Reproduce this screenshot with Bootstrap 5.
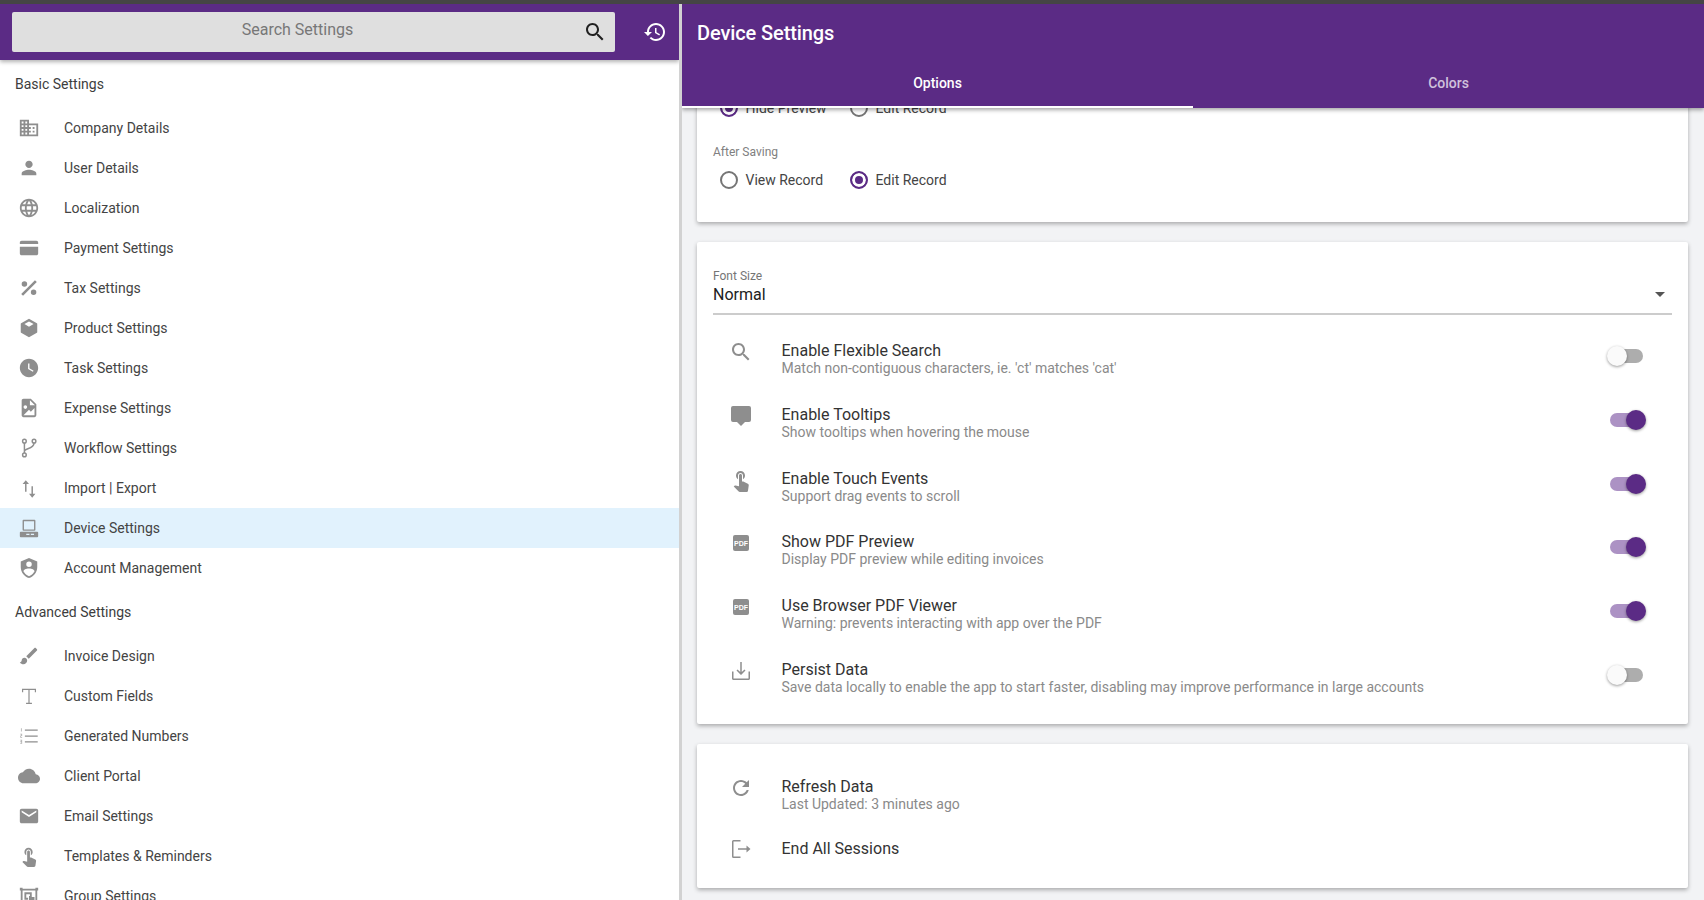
<!DOCTYPE html>
<html lang="en">
<head>
<meta charset="utf-8">
<title>Device Settings</title>
<link href="https://cdn.jsdelivr.net/npm/bootstrap@5.3.0/dist/css/bootstrap.min.css" rel="stylesheet">
<style>
html,body{height:100%;overflow:hidden}
body{font-family:Roboto,"Liberation Sans",sans-serif;background:#f2f3f5;color:#212121;border-top:4px solid #454545}
.app-shell{height:896px}
.side-pane{width:679px;background:#fff;height:100%;overflow:hidden;flex:none}
.pane-gap{width:3px;background:#d2d2d2;flex:none}
.main-pane{flex:1;min-width:0;height:100%;overflow:hidden;background:#f2f3f5}
.side-head{height:56px;background:#5b2b85;padding:8px 12px;box-shadow:0 2px 4px rgba(0,0,0,.3);position:relative;z-index:2}
.search-box{width:603px;height:40px;background:#dfdfdf;border-radius:2px;color:#777;font-size:16px;position:relative;padding:0 32px 4px 0}
.search-ico{position:absolute;right:8px;top:8px;width:24px;height:24px;fill:#212121}
.hist-ico{width:24px;height:24px;fill:#fff;margin-left:28px}
.sec-title{height:48px;padding-left:15px;font-size:14px;color:#3d3d3d;line-height:48px}
.side-row{height:40px;padding-left:18px;font-size:14px;color:#444;gap:24px}
.side-row.is-active{background:#e1f2fd}
.ico{width:24px;height:24px;fill:#8e8e8e;flex:none}
.side-row .ico{width:22px;height:22px}
.main-head{height:104px;background:#5b2b85;color:#fff;box-shadow:0 2px 4px rgba(0,0,0,.35);position:relative;z-index:2}
.head-title{font-size:20px;font-weight:500;letter-spacing:-.1px;padding:16px 15px 0;height:56px;line-height:26px}
.tab-item{height:48px;font-size:14px;font-weight:500;line-height:46px;text-align:center;color:rgba(255,255,255,.72);flex:1 1 0}
.tab-item.is-on{color:#fff;border-bottom:2px solid #fff}
.scroller{margin:-20px 16px 0 15px}
.sheet{border:0;border-radius:2px;background:#fff;box-shadow:0 2px 4px rgba(0,0,0,.3);margin-bottom:20px}
.sheet-a{padding:0 16px 22px;height:134px}
.radio-row{height:40px;gap:0}
.radio-opt{width:130px;padding-left:7px;font-size:14px;color:#444;gap:7.500px}
.radio-dot{width:18px;height:18px;border-radius:50%;border:2px solid #757575;flex:none}
.radio-dot.is-on{border-color:#5b2b85;background:#5b2b85;box-shadow:inset 0 0 0 3px #fff}
.field-label{font-size:12px;color:#808080;line-height:16px;margin-top:16px}
.sheet-b{padding:26px 16px 13px;height:482px}
.sel-label{font-size:12px;color:#757575;line-height:16px}
.sel-value{font-size:16px;color:#212121;line-height:20px;height:31px;border-bottom:2px solid #ccc;padding-top:1px;position:relative}
.sel-caret{position:absolute;right:7px;top:8px;width:0;height:0;border-left:5px solid transparent;border-right:5px solid transparent;border-top:5px solid #555}
.opt-gap{height:13px}
.opt-row{height:64.200px;padding:13px 0 0 68.500px;position:relative}
.opt-row .ico{position:absolute;left:16px;top:12px}
.opt-title{font-size:16px;line-height:20px;color:#333}
.opt-sub{font-size:14px;line-height:15px;color:#8a8a8a}
.tgl{position:absolute;left:897px;top:21px;width:33px;height:14px;border-radius:7px;background:#adadad}
.tgl::after{content:"";position:absolute;top:-3px;left:-3px;width:20px;height:20px;border-radius:50%;background:#fafafa;box-shadow:0 1px 3px rgba(0,0,0,.4)}
.tgl.is-on{background:#ac92c4}
.tgl.is-on::after{left:16px;background:#5b2b85}
.sheet-c{padding:20px 16px 11px;height:144px}
.sheet-c .opt-row.is-plain{height:56px;padding-top:18px}
.sheet-c .opt-row.is-plain .ico{top:16px}
.sheet-c .opt-row.is-tall{height:57px}
.pdf-txt{font-family:"Liberation Sans",sans-serif;font-weight:700;font-size:7px;fill:#fff}
</style>
</head>
<body>
<div class="app-shell d-flex">
  <aside class="side-pane">
    <div class="side-head d-flex align-items-center">
      <div class="search-box d-flex align-items-center justify-content-center">Search Settings
        <svg class="search-ico" viewBox="0 0 24 24"><path d="M15.5 14h-.79l-.28-.27C15.41 12.59 16 11.11 16 9.5 16 5.91 13.09 3 9.5 3S3 5.91 3 9.5 5.91 16 9.5 16c1.61 0 3.09-.59 4.23-1.57l.27.28v.79l5 4.99L20.49 19l-4.99-5zm-6 0C7.01 14 5 11.99 5 9.5S7.01 5 9.5 5 14 7.01 14 9.5 11.99 14 9.5 14z"/></svg>
      </div>
      <svg class="hist-ico" viewBox="0 0 24 24"><path d="M13 3c-4.97 0-9 4.03-9 9H1l3.89 3.89.07.14L9 12H6c0-3.87 3.13-7 7-7s7 3.13 7 7-3.13 7-7 7c-1.93 0-3.68-.79-4.94-2.06l-1.42 1.42C8.27 19.99 10.51 21 13 21c4.97 0 9-4.03 9-9s-4.03-9-9-9zm-1 5v5l4.28 2.54.72-1.21-3.5-2.08V8H12z"/></svg>
    </div>
    <div class="sec-title">Basic Settings</div>
    <div class="side-row d-flex align-items-center"><svg class="ico" viewBox="0 0 24 24"><path d="M12 7V3H2v18h20V7H12zM6 19H4v-2h2v2zm0-4H4v-2h2v2zm0-4H4V9h2v2zm0-4H4V5h2v2zm4 12H8v-2h2v2zm0-4H8v-2h2v2zm0-4H8V9h2v2zm0-4H8V5h2v2zm10 12h-8v-2h2v-2h-2v-2h2v-2h-2V9h8v10zm-2-8h-2v2h2v-2zm0 4h-2v2h2v-2z"/></svg>Company Details</div>
    <div class="side-row d-flex align-items-center"><svg class="ico" viewBox="0 0 24 24"><path d="M12 12c2.21 0 4-1.79 4-4s-1.79-4-4-4-4 1.79-4 4 1.79 4 4 4zm0 2c-2.67 0-8 1.34-8 4v2h16v-2c0-2.66-5.33-4-8-4z"/></svg>User Details</div>
    <div class="side-row d-flex align-items-center"><svg class="ico" viewBox="0 0 24 24"><path d="M11.99 2C6.47 2 2 6.48 2 12s4.47 10 9.99 10C17.52 22 22 17.52 22 12S17.52 2 11.99 2zm6.93 6h-2.95c-.32-1.25-.78-2.45-1.38-3.56 1.84.63 3.37 1.91 4.33 3.56zM12 4.04c.83 1.2 1.48 2.53 1.91 3.96h-3.82c.43-1.43 1.08-2.76 1.91-3.96zM4.26 14C4.1 13.36 4 12.69 4 12s.1-1.36.26-2h3.38c-.08.66-.14 1.32-.14 2 0 .68.06 1.34.14 2H4.26zm.82 2h2.95c.32 1.25.78 2.45 1.38 3.56-1.84-.63-3.37-1.9-4.33-3.56zm2.95-8H5.08c.96-1.66 2.49-2.93 4.33-3.56C8.81 5.55 8.35 6.75 8.03 8zM12 19.96c-.83-1.2-1.48-2.53-1.91-3.96h3.82c-.43 1.43-1.08 2.76-1.91 3.96zM14.34 14H9.66c-.09-.66-.16-1.32-.16-2 0-.68.07-1.35.16-2h4.68c.09.65.16 1.32.16 2 0 .68-.07 1.34-.16 2zm.25 5.56c.6-1.11 1.06-2.31 1.38-3.56h2.95c-.96 1.65-2.49 2.93-4.33 3.56zM16.36 14c.08-.66.14-1.32.14-2 0-.68-.06-1.34-.14-2h3.38c.16.64.26 1.31.26 2s-.1 1.36-.26 2h-3.38z"/></svg>Localization</div>
    <div class="side-row d-flex align-items-center"><svg class="ico" viewBox="0 0 24 24"><path d="M2 6c0-1.1.9-2 2-2h16c1.1 0 2 .9 2 2v1.500H2V6zm0 4.500h20V18c0 1.100-.9 2-2 2H4c-1.100 0-2-.9-2-2v-7.500z"/></svg>Payment Settings</div>
    <div class="side-row d-flex align-items-center"><svg class="ico" viewBox="0 0 24 24"><path d="M18.500 3.500l2 2-15 15-2-2 15-15zM7 4.500a3 3 0 1 1 0 6 3 3 0 0 1 0-6zm10 9a3 3 0 1 1 0 6 3 3 0 0 1 0-6z"/></svg>Tax Settings</div>
    <div class="side-row d-flex align-items-center"><svg class="ico" viewBox="0 0 24 24"><path fill-rule="evenodd" d="M12 2l8.600 4.900a1 1 0 0 1 .4.800v8.600a1 1 0 0 1-.4.800L12 22l-8.600-4.900a1 1 0 0 1-.4-.8V7.700a1 1 0 0 1 .4-.8L12 2zm0 2.800L7 7.700l5 2.900 5-2.900-5-2.900z"/></svg>Product Settings</div>
    <div class="side-row d-flex align-items-center"><svg class="ico" viewBox="0 0 24 24"><path d="M12 2C6.5 2 2 6.5 2 12s4.5 10 10 10 10-4.500 10-10S17.500 2 12 2zm4.200 14.200L11 13V7h1.500v5.200l4.500 2.700-.8 1.300z"/></svg>Task Settings</div>
    <div class="side-row d-flex align-items-center"><svg class="ico" viewBox="0 0 24 24"><path d="M13,9H18.5L13,3.5V9M6,2H14L20,8V20A2,2 0 0,1 18,22H6C4.89,22 4,21.1 4,20V4C4,2.89 4.89,2 6,2M6,20H15L18,20V12L14,16L12,14L6,20M8,9A2,2 0 0,0 6,11A2,2 0 0,0 8,13A2,2 0 0,0 10,11A2,2 0 0,0 8,9Z"/></svg>Expense Settings</div>
    <div class="side-row d-flex align-items-center"><svg class="ico" viewBox="0 0 24 24"><g fill="none" stroke="#8e8e8e" stroke-width="1.6"><circle cx="7" cy="4.500" r="2"/><circle cx="17.500" cy="4.500" r="2"/><circle cx="7" cy="19.500" r="2"/><path d="M7 6.500v11M7 15.500c0-3 10.500-2.500 10.500-9"/></g></svg>Workflow Settings</div>
    <div class="side-row d-flex align-items-center"><svg class="ico" viewBox="0 0 24 24"><path d="M8.500 3.500L5 7.700h2.700v8.300h1.600V7.700H12L8.500 3.500zM15.500 22.500l3.500-4.200h-2.700V10h-1.600v8.300H12l3.500 4.200z"/></svg>Import | Export</div>
    <div class="side-row is-active d-flex align-items-center"><svg class="ico" viewBox="0 0 24 24"><path fill-rule="evenodd" d="M6 3h12a1 1 0 0 1 1 1v10a1 1 0 0 1-1 1H6a1 1 0 0 1-1-1V4a1 1 0 0 1 1-1zm.500 1.500v9h11v-9h-11z"/><path fill-rule="evenodd" d="M3 16h18a1 1 0 0 1 1 1v4a1 1 0 0 1-1 1H3a1 1 0 0 1-1-1v-4a1 1 0 0 1 1-1zm6 2.400v1.200h3.500v-1.200H9zm5 0v1.200h3.500v-1.200H14z"/></svg>Device Settings</div>
    <div class="side-row d-flex align-items-center"><svg class="ico" viewBox="0 0 24 24"><path d="M12,1L3,5V11C3,16.55 6.84,21.74 12,23C17.16,21.74 21,16.55 21,11V5L12,1M12,5A3,3 0 0,1 15,8A3,3 0 0,1 12,11A3,3 0 0,1 9,8A3,3 0 0,1 12,5M17.13,17C15.92,18.85 14.11,20.24 12,20.92C9.89,20.24 8.08,18.85 6.87,17C6.53,16.5 6.24,16 6,15.47C6,13.82 8.71,12.47 12,12.47C15.29,12.47 18,13.79 18,15.47C17.76,16 17.47,16.5 17.13,17Z"/></svg>Account Management</div>
    <div class="sec-title">Advanced Settings</div>
    <div class="side-row d-flex align-items-center"><svg class="ico" viewBox="0 0 24 24"><path d="M7 14c-1.660 0-3 1.340-3 3 0 1.310-1.160 2-2 2 .92 1.220 2.490 2 4 2 2.210 0 4-1.790 4-4 0-1.660-1.340-3-3-3zm13.710-9.370l-1.340-1.340c-.39-.39-1.020-.39-1.410 0L9 12.250 11.750 15l8.960-8.960c.39-.39.39-1.020 0-1.410z"/></svg>Invoice Design</div>
    <div class="side-row d-flex align-items-center"><svg class="ico" viewBox="0 0 24 24"><path fill="none" stroke="#8e8e8e" stroke-width="1.300" d="M5 8V4.700h14V8M12 4.700v15M8.800 20h6.400"/></svg>Custom Fields</div>
    <div class="side-row d-flex align-items-center"><svg class="ico" viewBox="0 0 24 24"><path d="M7.500 5h14v1.300h-14zM7.500 11.400h14v1.300h-14zM7.500 17.700h14v1.300h-14z"/><path fill-opacity=".7" d="M3.200 3.500h.9v3.500h-.9zM2.500 9.500h2v2.500h-1.100v1.100h1.100v.9h-2v-2.500h1.100v-1.100H2.500zM2.500 16h2v4.500h-2v-.9h1.100v-.9H2.500v-.9h1.100v-.9H2.500z"/></svg>Generated Numbers</div>
    <div class="side-row d-flex align-items-center"><svg class="ico" viewBox="0 0 24 24"><path d="M19.350 10.040C18.670 6.590 15.640 4 12 4 9.110 4 6.600 5.640 5.350 8.040 2.340 8.360 0 10.910 0 14c0 3.310 2.690 6 6 6h13c2.760 0 5-2.240 5-5 0-2.640-2.050-4.780-4.650-4.960z"/></svg>Client Portal</div>
    <div class="side-row d-flex align-items-center"><svg class="ico" viewBox="0 0 24 24"><path d="M20 4H4c-1.100 0-1.990.9-1.990 2L2 18c0 1.100.9 2 2 2h16c1.100 0 2-.9 2-2V6c0-1.100-.9-2-2-2zm0 4l-8 5-8-5V6l8 5 8-5v2z"/></svg>Email Settings</div>
    <div class="side-row d-flex align-items-center"><svg class="ico" viewBox="0 0 24 24"><path d="M9 11.240V7.500C9 6.120 10.120 5 11.500 5S14 6.120 14 7.500v3.740c1.210-.81 2-2.180 2-3.740C16 5.010 13.990 3 11.500 3S7 5.010 7 7.500c0 1.560.79 2.930 2 3.740zm9.840 4.630l-4.540-2.260c-.17-.07-.35-.11-.54-.11H13v-6c0-.83-.67-1.500-1.500-1.500S10 6.670 10 7.500v10.740l-3.430-.72c-.08-.01-.15-.03-.24-.03-.31 0-.59.13-.79.33l-.79.8 4.940 4.940c.27.27.65.44 1.060.44h6.790c.75 0 1.330-.55 1.440-1.280l.75-5.270c.01-.07.02-.14.02-.2 0-.62-.38-1.160-.91-1.380z"/></svg>Templates &amp; Reminders</div>
    <div class="side-row d-flex align-items-center"><svg class="ico" viewBox="0 0 24 24"><path d="M2 3h3v1h14V3h3v3h-1v14h1v3h-3v-1H5v1H2v-3h1V6H2V3zm3 3v14h14V6H5zm2 2h8v6h-3v-2h1v-2H9v4h2v2H7V8zm5 5h6v6h-6v-6z"/></svg>Group Settings</div>
  </aside>
  <div class="pane-gap"></div>
  <main class="main-pane d-flex flex-column">
    <header class="main-head flex-none">
      <div class="head-title">Device Settings</div>
      <div class="d-flex"><div class="tab-item is-on">Options</div><div class="tab-item">Colors</div></div>
    </header>
    <div class="scroller">
      <section class="card sheet sheet-a">
        <div class="radio-row d-flex">
          <div class="radio-opt d-flex align-items-center"><span class="radio-dot is-on"></span>Hide Preview</div>
          <div class="radio-opt d-flex align-items-center"><span class="radio-dot"></span>Edit Record</div>
        </div>
        <div class="field-label">After Saving</div>
        <div class="radio-row d-flex">
          <div class="radio-opt d-flex align-items-center"><span class="radio-dot"></span>View Record</div>
          <div class="radio-opt d-flex align-items-center"><span class="radio-dot is-on"></span>Edit Record</div>
        </div>
      </section>
      <section class="card sheet sheet-b">
        <div class="sel-label">Font Size</div>
        <div class="sel-value">Normal<span class="sel-caret"></span></div>
        <div class="opt-gap"></div>
        <div class="opt-row"><svg class="ico" viewBox="0 0 24 24"><path d="M15.500 14h-.79l-.28-.27C15.410 12.590 16 11.110 16 9.500 16 5.910 13.090 3 9.500 3S3 5.910 3 9.500 5.910 16 9.500 16c1.610 0 3.090-.59 4.230-1.570l.27.28v.79l5 4.990L20.490 19l-4.990-5zm-6 0C7.010 14 5 11.990 5 9.500S7.010 5 9.500 5 14 7.010 14 9.500 11.990 14 9.500 14z"/></svg><div class="opt-title">Enable Flexible Search</div><div class="opt-sub">Match non-contiguous characters, ie. 'ct' matches 'cat'</div><span class="tgl"></span></div>
        <div class="opt-row"><svg class="ico" viewBox="0 0 24 24"><path d="M4,2H20A2,2 0 0,1 22,4V16A2,2 0 0,1 20,18H16L12,22L8,18H4A2,2 0 0,1 2,16V4A2,2 0 0,1 4,2Z"/></svg><div class="opt-title">Enable Tooltips</div><div class="opt-sub">Show tooltips when hovering the mouse</div><span class="tgl is-on"></span></div>
        <div class="opt-row"><svg class="ico" viewBox="0 0 24 24"><path d="M9 11.240V7.500C9 6.120 10.120 5 11.500 5S14 6.120 14 7.500v3.740c1.210-.81 2-2.180 2-3.740C16 5.010 13.990 3 11.500 3S7 5.010 7 7.500c0 1.560.79 2.930 2 3.740zm9.840 4.630l-4.540-2.260c-.17-.07-.35-.11-.54-.11H13v-6c0-.83-.67-1.500-1.500-1.500S10 6.670 10 7.500v10.740l-3.430-.72c-.08-.01-.15-.03-.24-.03-.31 0-.59.13-.79.33l-.79.8 4.940 4.940c.27.27.65.44 1.060.44h6.790c.75 0 1.330-.55 1.440-1.280l.75-5.270c.01-.07.02-.14.02-.2 0-.62-.38-1.160-.91-1.380z"/></svg><div class="opt-title">Enable Touch Events</div><div class="opt-sub">Support drag events to scroll</div><span class="tgl is-on"></span></div>
        <div class="opt-row"><svg class="ico" viewBox="0 0 24 24"><rect x="4" y="4" width="16" height="16" rx="2"/><text class="pdf-txt" x="12" y="14.500" text-anchor="middle">PDF</text></svg><div class="opt-title">Show PDF Preview</div><div class="opt-sub">Display PDF preview while editing invoices</div><span class="tgl is-on"></span></div>
        <div class="opt-row"><svg class="ico" viewBox="0 0 24 24"><rect x="4" y="4" width="16" height="16" rx="2"/><text class="pdf-txt" x="12" y="14.500" text-anchor="middle">PDF</text></svg><div class="opt-title">Use Browser PDF Viewer</div><div class="opt-sub">Warning: prevents interacting with app over the PDF</div><span class="tgl is-on"></span></div>
        <div class="opt-row"><svg class="ico" viewBox="0 0 24 24"><path d="M21 12.500v7c0 .8-.7 1.500-1.500 1.500h-15C3.700 21 3 20.300 3 19.500v-7h1.500V19.500h15v-7H21zm-8.250.6l2.700-2.700 1.050 1.050-4.500 4.500-4.500-4.500 1.050-1.050 2.700 2.700V3h1.500v10.100z"/></svg><div class="opt-title">Persist Data</div><div class="opt-sub">Save data locally to enable the app to start faster, disabling may improve performance in large accounts</div><span class="tgl"></span></div>
      </section>
      <section class="card sheet sheet-c">
        <div class="opt-row is-tall"><svg class="ico" viewBox="0 0 24 24"><path d="M17.650 6.350C16.200 4.900 14.210 4 12 4c-4.420 0-7.990 3.580-7.990 8s3.570 8 7.990 8c3.730 0 6.840-2.550 7.730-6h-2.080c-.82 2.330-3.040 4-5.650 4-3.310 0-6-2.690-6-6s2.690-6 6-6c1.660 0 3.140.69 4.220 1.780L13 11h7V4l-2.350 2.350z"/></svg><div class="opt-title">Refresh Data</div><div class="opt-sub">Last Updated: 3 minutes ago</div></div>
        <div class="opt-row is-plain"><svg class="ico" viewBox="0 0 24 24"><path d="M4.500 3h7v1.500H4.500v15h7V21h-7A1.500 1.500 0 0 1 3 19.500v-15A1.500 1.500 0 0 1 4.500 3zM17.500 8.500L21.500 12l-4 3.500v-2.750H9v-1.500h8.500V8.500z"/></svg><div class="opt-title">End All Sessions</div></div>
      </section>
    </div>
  </main>
</div>
<script src="https://cdn.jsdelivr.net/npm/bootstrap@5.3.0/dist/js/bootstrap.bundle.min.js"></script>
</body>
</html>
